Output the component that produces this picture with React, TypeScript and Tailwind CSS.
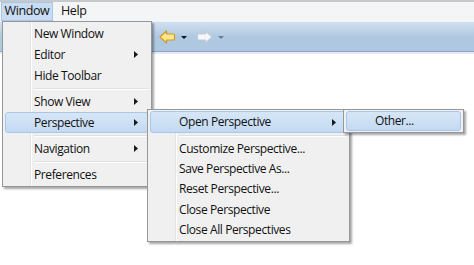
import React from "react";

const font = { fontFamily: '"Segoe UI", "Open Sans", "Noto Sans", sans-serif', letterSpacing: "-0.4px" };

function Arrow() {
  return (
    <svg width="4" height="7" viewBox="0 0 4 7" className="block">
      <path d="M0 0 L4 3.5 L0 7 Z" fill="#1a1a1a" />
    </svg>
  );
}

function Item({ label, sub, active, h = "h-[21px]", col = 28 }: { label: string; sub?: boolean; active?: boolean; h?: string; col?: number }) {
  return (
    <div
      className={`relative flex items-center ${h} mx-[2px] rounded-[3px] border ${
        active ? "border-[#a7c7ea] bg-gradient-to-b from-[#d6e6f7] to-[#c4daf2]" : "border-transparent"
      }`}
    >
      <div className="shrink-0" style={{ width: col }} />
      <span className="flex-1 text-[12px] text-[#111] leading-none">{label}</span>
      {sub && (
        <div className="mr-[10px]">
          <Arrow />
        </div>
      )}
    </div>
  );
}

function Sep({ col = 28, h = "h-[6px]" }: { col?: number; h?: string }) {
  return (
    <div className={`flex ${h} items-center`}>
      <div style={{ width: col + 3 }} />
      <div className="mr-[2px] flex-1 border-t border-[#e0e0e0] border-b-white border-b" />
    </div>
  );
}

export default function App() {
  return (
    <div className="relative h-[265px] w-[474px] overflow-hidden bg-white" style={font}>
      {/* top line */}
      <div className="h-[2px] bg-[#c6c9cc]" />
      {/* menu bar */}
      <div className="flex h-[19px] items-stretch bg-[#f4f5f7] text-[12.5px] text-[#111]">
        <div className="ml-[1px] flex w-[52px] items-center justify-center border border-[#a9c6e6] bg-[#c8dcf2]">Window</div>
        <div className="flex items-center px-[8px]">Help</div>
      </div>
      {/* toolbar */}
      <div className="h-[1px] bg-[#eef2f8]" />
      <div className="flex h-[29px] items-center bg-gradient-to-b from-[#d2e0f0] via-[#b0c9e2] to-[#aec8e1] pl-[159px]">
        <svg width="70" height="14" viewBox="0 0 70 14">
          {/* back arrow yellow */}
          <path d="M1 7 L7.5 1 L7.5 4 L14.5 4 Q15.5 4 15.5 5 L15.5 9 Q15.5 10 14.5 10 L7.5 10 L7.5 13 Z" fill="#ffe68a" stroke="#d39b1e" strokeWidth="1.2" strokeLinejoin="round" />
          <path d="M22 6 L28 6 L25 9 Z" fill="#111" />
          {/* forward arrow white */}
          <path d="M53 7 L46.5 1 L46.5 4 L39.5 4 Q38.5 4 38.5 5 L38.5 9 Q38.5 10 39.5 10 L46.5 10 L46.5 13 Z" fill="#f6f7f9" stroke="#c2cad6" strokeWidth="1.2" strokeLinejoin="round" />
          <path d="M59 6 L65 6 L62 9 Z" fill="#6d7f95" />
        </svg>
      </div>
      <div className="h-[1px] bg-[#8ea6c3]" />
      <div className="h-[2px] bg-[#e6e9f8]" />

      {/* main menu */}
      <div className="absolute left-[2px] top-[21px] w-[150px] border border-[#979797] bg-[#f0f0f0] py-[1px] shadow-[2px_2px_2px_rgba(0,0,0,0.35)]">
        <div className="pointer-events-none absolute bottom-0 left-[27px] top-0 w-[2px] border-l border-[#e2e3e3] border-r border-r-white" />
        <Item label="New Window" />
        <Item label="Editor" sub />
        <Item label="Hide Toolbar" />
        <Sep h="h-[5px]" />
        <Item label="Show View" sub />
        <Item label="Perspective" sub active />
        <Sep h="h-[5px]" />
        <Item label="Navigation" sub />
        <Sep h="h-[5px]" />
        <Item label="Preferences" />
      </div>

      {/* perspective submenu */}
      <div className="absolute left-[147px] top-[109px] w-[203px] border border-[#979797] bg-[#f0f0f0] py-[1px] shadow-[2px_2px_2px_rgba(0,0,0,0.35)]">
        <div className="pointer-events-none absolute bottom-0 left-[27px] top-0 w-[2px] border-l border-[#e2e3e3] border-r border-r-white" />
        <Item label="Open Perspective" sub active h="h-[22px]" />
        <Sep />
        <Item label="Customize Perspective..." h="h-[20px]" />
        <Item label="Save Perspective As..." h="h-[20px]" />
        <Item label="Reset Perspective..." h="h-[20px]" />
        <Item label="Close Perspective" h="h-[21px]" />
        <Item label="Close All Perspectives" h="h-[20px]" />
      </div>

      {/* open perspective submenu */}
      <div className="absolute left-[343px] top-[109px] w-[121px] border border-[#979797] bg-[#f0f0f0] py-[1px] shadow-[2px_2px_2px_rgba(0,0,0,0.35)]">
        <div className="pointer-events-none absolute bottom-0 left-[27px] top-0 w-[2px] border-l border-[#e2e3e3] border-r border-r-white" />
        <Item label="Other..." active h="h-[20px]" />
      </div>
    </div>
  );
}
